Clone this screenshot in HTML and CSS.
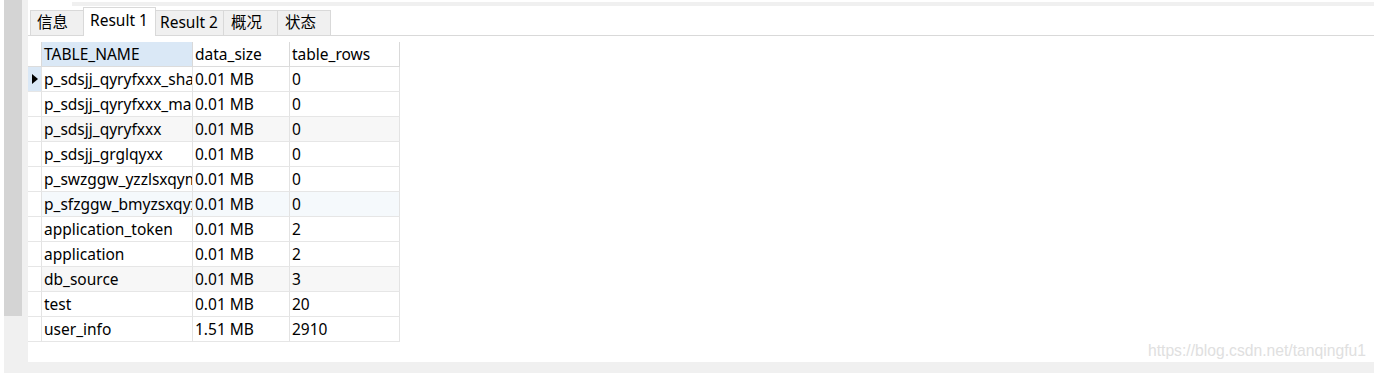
FILE: index.html
```html
<!DOCTYPE html>
<html lang="zh-CN">
<head>
<meta charset="utf-8">
<title>Result 1</title>
<link rel="stylesheet" href="styles.css">
</head>
<body>
<div class="screen">
  <div class="gutter-white"></div>
  <div class="gutter"><div class="gutter-bar"></div></div>
  <div class="main">
    <div class="topband"></div>
    <div class="tabs">
      <div class="tab t1">信息</div>
      <div class="tab t2 active">Result 1</div>
      <div class="tab t3">Result 2</div>
      <div class="tab t4">概况</div>
      <div class="tab t5">状态</div>
    </div>
    <div class="content">
      <div class="grid">
        <div class="ind head"></div>
        <div class="cell head sel">TABLE_NAME</div>
        <div class="cell head">data_size</div>
        <div class="cell head">table_rows</div>

        <div class="ind cur"><svg class="arrow" width="6" height="10" viewBox="0 0 6 10"><path d="M0 0 L6 5 L0 10 Z" fill="#000"/></svg></div>
        <div class="cell">p_sdsjj_qyryfxxx_shareholder</div>
        <div class="cell">0.01 MB</div>
        <div class="cell">0</div>

        <div class="ind"></div>
        <div class="cell">p_sdsjj_qyryfxxx_main</div>
        <div class="cell">0.01 MB</div>
        <div class="cell">0</div>

        <div class="ind"></div>
        <div class="cell alt">p_sdsjj_qyryfxxx</div>
        <div class="cell alt">0.01 MB</div>
        <div class="cell alt">0</div>

        <div class="ind"></div>
        <div class="cell">p_sdsjj_grglqyxx</div>
        <div class="cell">0.01 MB</div>
        <div class="cell">0</div>

        <div class="ind"></div>
        <div class="cell">p_swzggw_yzzlsxqymd</div>
        <div class="cell">0.01 MB</div>
        <div class="cell">0</div>

        <div class="ind"></div>
        <div class="cell blue">p_sfzggw_bmyzsxqyxx</div>
        <div class="cell blue">0.01 MB</div>
        <div class="cell blue">0</div>

        <div class="ind"></div>
        <div class="cell">application_token</div>
        <div class="cell">0.01 MB</div>
        <div class="cell">2</div>

        <div class="ind"></div>
        <div class="cell">application</div>
        <div class="cell">0.01 MB</div>
        <div class="cell">2</div>

        <div class="ind"></div>
        <div class="cell alt">db_source</div>
        <div class="cell alt">0.01 MB</div>
        <div class="cell alt">3</div>

        <div class="ind"></div>
        <div class="cell">test</div>
        <div class="cell">0.01 MB</div>
        <div class="cell">20</div>

        <div class="ind"></div>
        <div class="cell">user_info</div>
        <div class="cell">1.51 MB</div>
        <div class="cell">2910</div>
      </div>
    </div>
    <div class="status"></div>
  </div>
  <div class="watermark">https://blog.csdn.net/tanqingfu1</div>
</div>
</body>
</html>
```

FILE: styles.css
```css
html, body {
  margin: 0;
  padding: 0;
  background: #ffffff;
}
.screen {
  position: relative;
  width: 1374px;
  height: 373px;
  display: flex;
  overflow: hidden;
  font-family: "Noto Sans", "Noto Sans CJK SC", sans-serif;
  color: #000;
}
.gutter-white {
  width: 4px;
  background: #ffffff;
}
.gutter {
  width: 24px;
  background: #f0f0f0;
}
.gutter-bar {
  width: 18px;
  height: 316px;
  background: #d4d4d4;
}
.main {
  flex: 1;
  display: flex;
  flex-direction: column;
}
.topband {
  margin: 2px 0 0 44px;
  height: 4px;
  background: #f0f0f0;
}
.tabs {
  height: 29px;
  border-bottom: 1px solid #d9d9d9;
  display: flex;
  align-items: flex-end;
  padding-left: 2px;
}
.tab {
  box-sizing: border-box;
  height: 25px;
  border: 1px solid #d9d9d9;
  border-bottom: none;
  background: #f0f0f0;
  margin-right: -1px;
  font-size: 15.5px;
  line-height: 23px;
  padding-left: 6px;
  white-space: nowrap;
  font-family: "Noto Sans", "Noto Sans CJK SC", sans-serif;
}
.tab.active {
  height: 29px;
  margin-bottom: -1px;
  background: #ffffff;
  line-height: 25px;
  position: relative;
  z-index: 1;
}
.t1 { width: 54px; }
.t2 { width: 73px; padding-left: 6px; }
.t3 { width: 69px; padding-left: 4px; }
.t4 { width: 55px; padding-left: 7px; }
.t5 { width: 54px; padding-left: 7px; }
.content {
  flex: 1;
  padding-top: 6px;
}
.grid {
  display: grid;
  grid-template-columns: 14px 151px 97px 110px;
  grid-auto-rows: 25px;
}
.ind, .cell {
  box-sizing: border-box;
  border-right: 1px solid #e3e3e3;
  border-bottom: 1px solid #e6e6e6;
}
.head {
  border-right-color: #d9d9d9;
  border-bottom-color: #dcdcdc;
}
.ind {
  display: flex;
  align-items: center;
  justify-content: center;
}
.ind.cur {
  background: #dae8f6;
}
.arrow {
  display: block;
}
.cell {
  font-size: 15.5px;
  line-height: 24px;
  padding-left: 2px;
  white-space: nowrap;
  overflow: hidden;
}
.cell.sel {
  background: #dae8f6;
}
.cell.alt {
  background: #f7f7f7;
}
.cell.blue {
  background: #f5f9fc;
}
.status {
  height: 11px;
  background: #f0f0f0;
}
.watermark {
  position: absolute;
  right: 8px;
  top: 342px;
  font-family: "Liberation Sans", Arial, sans-serif;
  font-size: 15.7px;
  color: #e0e0e0;
  white-space: nowrap;
}
```
